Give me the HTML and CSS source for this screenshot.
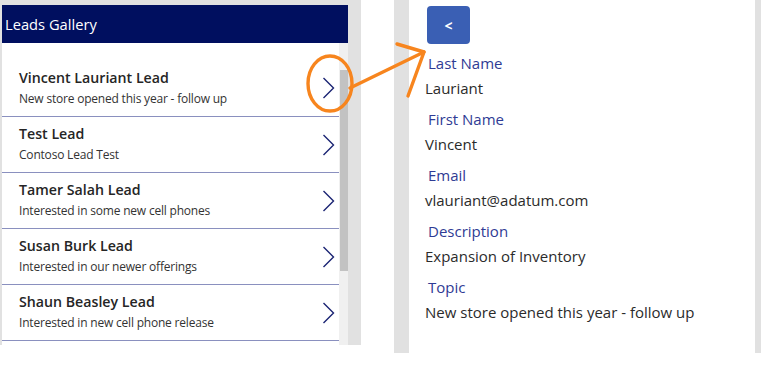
FILE: index.html
```html
<!DOCTYPE html>
<html>
<head>
<meta charset="utf-8">
<link rel="stylesheet" href="styles.css">
</head>
<body>
<div class="page">
  <section class="gallery-frame">
    <header class="gallery-header">Leads Gallery</header>
    <div class="gallery-body">
      <ul class="lead-list">
        <li class="lead first">
          <div class="lead-text">
            <div class="lead-name">Vincent Lauriant Lead</div>
            <div class="lead-desc">New store opened this year - follow up</div>
          </div>
          <svg class="chev" width="13" height="22" viewBox="0 0 13 22"><polyline points="1.5,1 11.5,11 1.5,21"/></svg>
        </li>
        <li class="lead">
          <div class="lead-text">
            <div class="lead-name">Test Lead</div>
            <div class="lead-desc">Contoso Lead Test</div>
          </div>
          <svg class="chev" width="13" height="22" viewBox="0 0 13 22"><polyline points="1.5,1 11.5,11 1.5,21"/></svg>
        </li>
        <li class="lead">
          <div class="lead-text">
            <div class="lead-name">Tamer Salah Lead</div>
            <div class="lead-desc">Interested in some new cell phones</div>
          </div>
          <svg class="chev" width="13" height="22" viewBox="0 0 13 22"><polyline points="1.5,1 11.5,11 1.5,21"/></svg>
        </li>
        <li class="lead">
          <div class="lead-text">
            <div class="lead-name">Susan Burk Lead</div>
            <div class="lead-desc">Interested in our newer offerings</div>
          </div>
          <svg class="chev" width="13" height="22" viewBox="0 0 13 22"><polyline points="1.5,1 11.5,11 1.5,21"/></svg>
        </li>
        <li class="lead">
          <div class="lead-text">
            <div class="lead-name">Shaun Beasley Lead</div>
            <div class="lead-desc">Interested in new cell phone release</div>
          </div>
          <svg class="chev" width="13" height="22" viewBox="0 0 13 22"><polyline points="1.5,1 11.5,11 1.5,21"/></svg>
        </li>
      </ul>
      <div class="scrollbar"><div class="thumb"></div></div>
    </div>
  </section>

  <section class="detail-frame">
    <div class="detail-card">
      <button class="back-btn">&lt;</button>
      <dl class="fields">
        <dt>Last Name</dt><dd>Lauriant</dd>
        <dt>First Name</dt><dd>Vincent</dd>
        <dt>Email</dt><dd>vlauriant@adatum.com</dd>
        <dt>Description</dt><dd>Expansion of Inventory</dd>
        <dt>Topic</dt><dd>New store opened this year - follow up</dd>
      </dl>
    </div>
  </section>

  <svg class="annotation" width="761" height="369" viewBox="0 0 761 369">
    <ellipse cx="330" cy="83.5" rx="22" ry="27.5"/>
    <polyline points="350,88 424,52"/>
    <polyline points="397,44 424,52 408,96"/>
  </svg>
</div>
</body>
</html>
```

FILE: styles.css
```css
* { box-sizing: border-box; }
html, body { margin: 0; padding: 0; background: #ffffff; }
body {
  font-family: "Open Sans", "Noto Sans", "Liberation Sans", sans-serif;
  width: 761px;
  height: 369px;
  overflow: hidden;
}
.page {
  position: relative;
  display: flex;
  align-items: flex-start;
  gap: 33px;
  width: 761px;
  height: 369px;
}

/* Left gallery */
.gallery-frame {
  width: 361px;
  height: 345px;
  background: #e1e1e1;
  padding: 5px 13px 0 2px;
  display: flex;
  flex-direction: column;
}
.gallery-header {
  height: 38px;
  background: #000f5f;
  color: #ffffff;
  font-size: 14.7px;
  padding-left: 3px;
  display: flex;
  align-items: center;
  padding-bottom: 1px;
}
.gallery-body {
  flex: 1;
  display: flex;
  min-height: 0;
}
.lead-list {
  list-style: none;
  margin: 0;
  padding: 0;
  width: 337px;
  background: #ffffff;
  overflow: hidden;
}
.lead {
  display: flex;
  align-items: center;
  height: 56px;
  border-bottom: 1px solid #8a90bf;
  padding-left: 17px;
  padding-right: 4px;
}
.lead.first {
  height: 74px;
  padding-top: 17px;
}
.lead-text { flex: 1; }
.lead-name {
  font-size: 14.2px;
  font-weight: 600;
  color: #252525;
  line-height: 19px;
}
.lead-desc {
  margin-top: 2px;
  font-size: 12px;
  letter-spacing: -0.2px;
  color: #333333;
  line-height: 20px;
}
.chev polyline {
  fill: none;
  stroke: #1b2473;
  stroke-width: 1.4;
}
.scrollbar {
  width: 9px;
  background: #f0f0f0;
  padding-top: 27px;
}
.thumb {
  height: 201px;
  background: #c2c2c2;
  margin-left: 1px;
}

/* Right detail */
.detail-frame {
  width: 367px;
  height: 353px;
  background: #e1e1e1;
  padding: 0 6px 0 15px;
}
.detail-card {
  height: 100%;
  background: #ffffff;
  padding: 6px 0 0 16px;
}
.back-btn {
  display: block;
  margin-left: 2px;
  width: 43px;
  height: 38px;
  border: none;
  border-radius: 4px;
  background: #3a5fb4;
  color: #ffffff;
  font-family: "Open Sans", "Noto Sans", sans-serif;
  font-size: 14px;
  font-weight: 700;
  padding: 0;
}
.fields {
  margin: 9px 0 0 0;
}
.fields dt {
  font-size: 15px;
  color: #2f3b94;
  padding-left: 3px;
  line-height: 20px;
  height: 25px;
}
.fields dd {
  margin: 0;
  font-size: 15px;
  color: #2b2b2b;
  line-height: 20px;
  height: 31px;
}

/* Orange annotation overlay */
.annotation {
  position: absolute;
  left: 0;
  top: 0;
  pointer-events: none;
}
.annotation ellipse,
.annotation polyline {
  fill: none;
  stroke: #f7851e;
  stroke-width: 3.4;
  stroke-linecap: round;
  stroke-linejoin: round;
}
```
